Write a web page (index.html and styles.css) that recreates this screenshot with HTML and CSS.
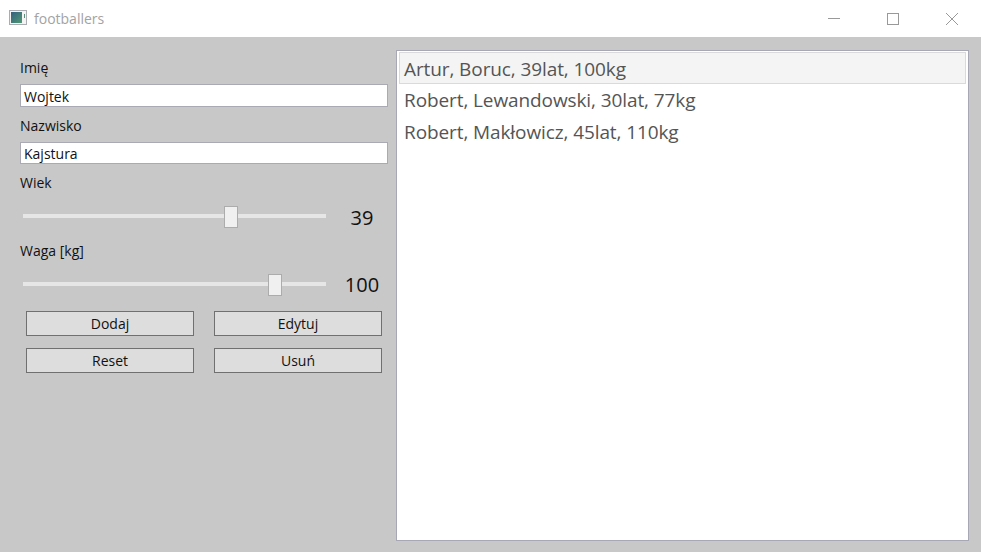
FILE: index.html
```html
<!DOCTYPE html>
<html lang="pl">
<head>
  <meta charset="UTF-8">
  <title>footballers</title>
  <link rel="stylesheet" href="styles.css">
</head>
<body>

  <div class="titlebar">
    <svg class="app-icon" width="19" height="16" viewBox="0 0 19 16">
      <defs>
        <linearGradient id="appFill" x1="0" y1="0" x2="1" y2="1">
          <stop offset="0" stop-color="#35607f"/>
          <stop offset="1" stop-color="#4f9a72"/>
        </linearGradient>
      </defs>
      <rect x="0.5" y="0.5" width="17" height="14" fill="#f4f4f4" stroke="#a9adb3"/>
      <rect x="2" y="2" width="11" height="11" fill="url(#appFill)"/>
      <rect x="15" y="4" width="1" height="4" fill="#5d8c7c"/>
    </svg>
    <span class="app-title">footballers</span>
    <div class="win-buttons">
      <svg width="12" height="12" viewBox="0 0 12 12"><path d="M0 5.5H12" stroke="#999" fill="none"/></svg>
      <svg width="12" height="12" viewBox="0 0 12 12"><rect x="0.5" y="0.5" width="11" height="11" stroke="#999" fill="none"/></svg>
      <svg width="12" height="12" viewBox="0 0 12 12"><path d="M0 0L12 12M12 0L0 12" stroke="#999" fill="none"/></svg>
    </div>
  </div>

  <div class="content">
    <div class="form">
      <label class="label first">Imię</label>
      <div class="textbox">Wojtek</div>
      <label class="label">Nazwisko</label>
      <div class="textbox short">Kajstura</div>
      <label class="label after-box">Wiek</label>
      <div class="slider-row">
        <div class="slider"><div class="thumb thumb-age"></div></div>
        <span class="value">39</span>
      </div>
      <label class="label after-slider">Waga [kg]</label>
      <div class="slider-row">
        <div class="slider"><div class="thumb thumb-weight"></div></div>
        <span class="value value-weight">100</span>
      </div>
      <div class="buttons">
        <button class="btn">Dodaj</button>
        <button class="btn">Edytuj</button>
        <button class="btn">Reset</button>
        <button class="btn">Usuń</button>
      </div>
    </div>

    <div class="list">
      <div class="list-item selected">Artur, Boruc, 39lat, 100kg</div>
      <div class="list-item">Robert, Lewandowski, 30lat, 77kg</div>
      <div class="list-item">Robert, Makłowicz, 45lat, 110kg</div>
    </div>
  </div>

</body>
</html>
```

FILE: styles.css
```css
* {
  box-sizing: border-box;
}

html, body {
  height: 100%;
}

body {
  margin: 0;
  display: flex;
  flex-direction: column;
  background-color: #c8c8c8;
  font-family: "Open Sans", "Noto Sans", sans-serif;
  color: #111;
  overflow: hidden;
}

.titlebar {
  height: 37px;
  background-color: #fff;
  display: flex;
  align-items: center;
  padding-left: 9px;
  flex-shrink: 0;
}

.app-icon {
  margin-right: 6px;
  margin-top: -1px;
}

.app-title {
  font-size: 14px;
  color: #a3a3a3;
}

.win-buttons {
  margin-left: auto;
  display: flex;
  gap: 47px;
  padding-right: 23px;
}

.content {
  flex: 1;
  display: flex;
  padding: 13px 12px 11px 20px;
  gap: 8px;
}

.form {
  width: 368px;
  flex-shrink: 0;
}

.label {
  display: block;
  height: 20px;
  line-height: 20px;
  font-size: 14px;
  margin-top: 9px;
}

.label.first {
  margin-top: 8px;
}

.label.after-box {
  margin-top: 8px;
  line-height: 22px;
}

.label.after-slider {
  margin-top: 0;
  line-height: 22px;
}

.label + .textbox {
  margin-top: 6px;
}

.textbox {
  height: 23px;
  line-height: 20px;
  background-color: #fff;
  border: 1px solid #aaaab4;
  padding: 2px 0 0 3px;
  font-size: 14px;
}

.textbox.short {
  height: 22px;
  padding-top: 1px;
}

.slider-row {
  height: 48px;
  display: flex;
  align-items: center;
  padding-left: 3px;
}

.slider {
  width: 303px;
  height: 4px;
  background-color: #e6e6e6;
  position: relative;
  flex-shrink: 0;
}

.thumb {
  position: absolute;
  top: -8px;
  width: 14px;
  height: 22px;
  background-color: #f0f0f0;
  border: 1px solid #acacac;
}

.thumb-age {
  left: 201px;
}

.thumb-weight {
  left: 245px;
}

.value {
  width: 72px;
  flex-shrink: 0;
  text-align: center;
  font-size: 20px;
  line-height: 26px;
  margin-top: 4px;
}

.value-weight {
  margin-top: 2px;
}

.buttons {
  display: grid;
  grid-template-columns: 168px 168px;
  column-gap: 20px;
  row-gap: 12px;
  padding-left: 6px;
  margin-top: 3px;
}

.btn {
  height: 25px;
  padding: 0;
  background-color: #dddddd;
  border: 1px solid #707070;
  border-radius: 0;
  font-family: inherit;
  font-size: 14px;
  color: #111;
}

.list {
  flex: 1;
  background-color: #fff;
  border: 1px solid #a8a8b4;
  padding: 1px 2px;
}

.list-item {
  height: 32px;
  line-height: 33px;
  padding-left: 5px;
  font-size: 19px;
  color: #555;
  letter-spacing: -0.1px;
}

.list-item.selected {
  background-color: #f4f4f4;
  border: 1px solid #dadada;
  padding-left: 4px;
  line-height: 32px;
}
```
